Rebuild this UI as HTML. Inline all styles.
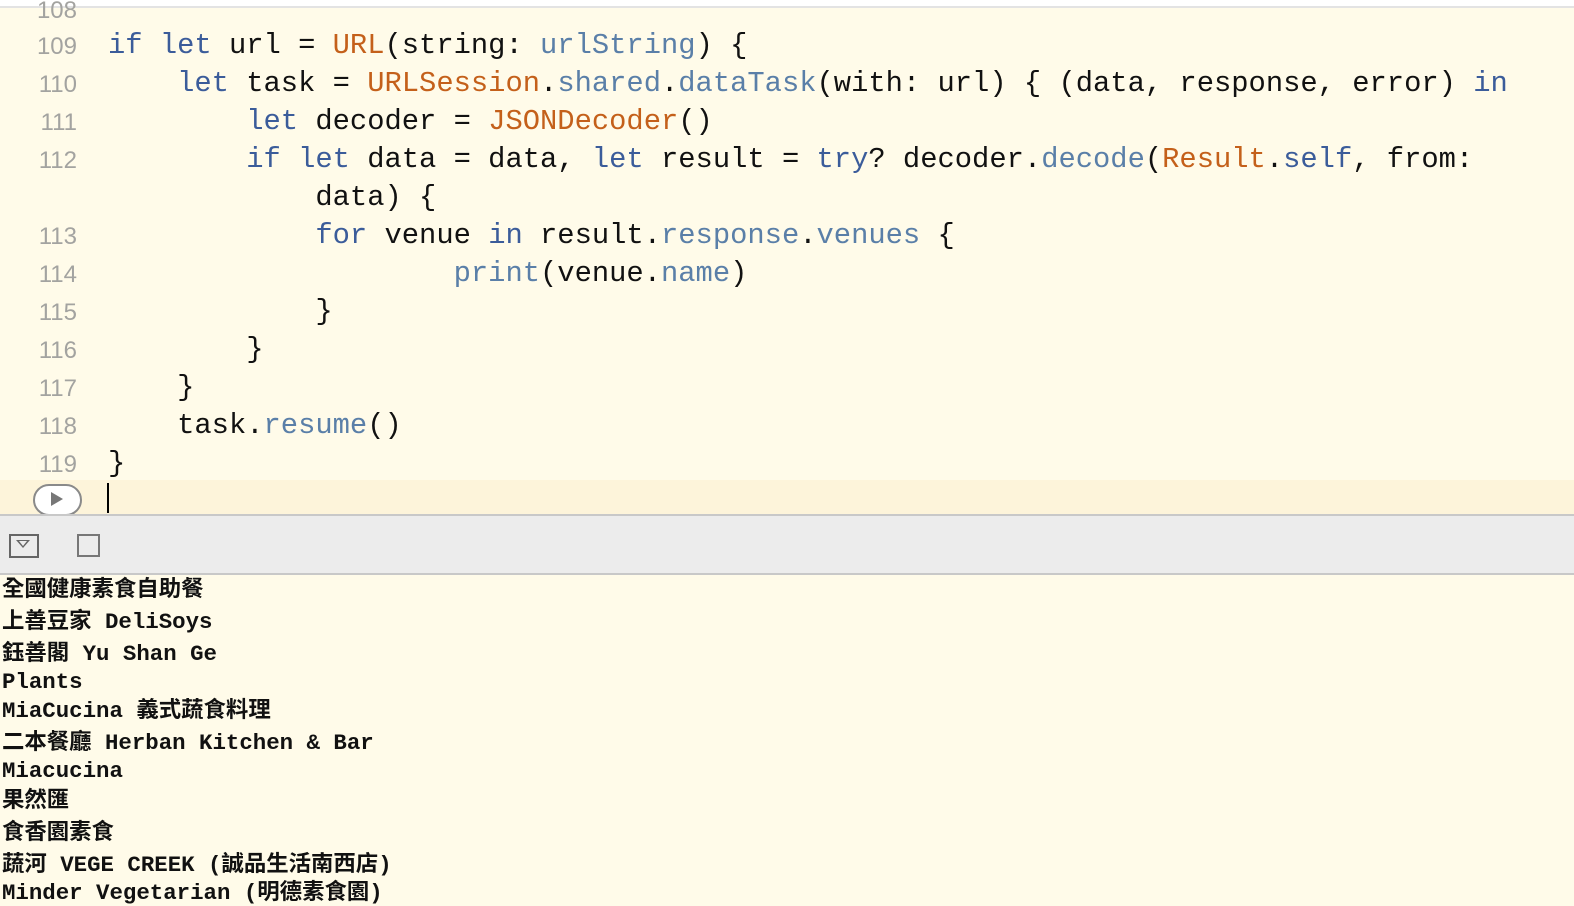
<!DOCTYPE html>
<html><head><meta charset="utf-8"><style>
body{margin:0;width:1574px;height:898px;overflow:hidden;background:#fffbe9;position:relative;font-family:"Liberation Mono",monospace}
.top{position:absolute;left:0;top:0;width:1574px;height:6px;background:#fff;border-bottom:2px solid #e3e3e3}
.ln{position:absolute;left:0;width:77px;text-align:right;font-family:"Liberation Sans",sans-serif;font-size:24px;color:#a3a3a0}
.c{position:absolute;left:108px;font-size:28.8px;white-space:pre;color:#111;line-height:38px}
.k{color:#3b5c9a}.t{color:#c4601a}.p{color:#5a7fa8}
.cur{position:absolute;left:0;top:480px;width:1574px;height:34px;background:#fdf4da}
.bar{position:absolute;left:0;top:514px;width:1574px;height:57px;background:#ececec;border-top:2px solid #c8c8c8;border-bottom:2px solid #c8c8c8}
.o{position:absolute;left:2px;font-family:"Liberation Mono","Noto Sans CJK TC",monospace;font-weight:bold;font-size:22.4px;white-space:pre;color:#111;line-height:26px}
</style></head><body>
<div class="top"></div>
<div class="ln" style="top:-3px;">108</div>
<div class="cur"></div>
<div class="ln" style="top:33px">109</div>
<div class="ln" style="top:71px">110</div>
<div class="ln" style="top:109px">111</div>
<div class="ln" style="top:147px">112</div>
<div class="ln" style="top:223px">113</div>
<div class="ln" style="top:261px">114</div>
<div class="ln" style="top:299px">115</div>
<div class="ln" style="top:337px">116</div>
<div class="ln" style="top:375px">117</div>
<div class="ln" style="top:413px">118</div>
<div class="ln" style="top:451px">119</div>
<div class="c" style="top:27px"><span class="k">if let</span> url = <span class="t">URL</span>(string: <span class="p">urlString</span>) {</div>
<div class="c" style="top:65px">    <span class="k">let</span> task = <span class="t">URLSession</span>.<span class="p">shared</span>.<span class="p">dataTask</span>(with: url) { (data, response, error) <span class="k">in</span></div>
<div class="c" style="top:103px">        <span class="k">let</span> decoder = <span class="t">JSONDecoder</span>()</div>
<div class="c" style="top:141px">        <span class="k">if let</span> data = data, <span class="k">let</span> result = <span class="k">try</span>? decoder.<span class="p">decode</span>(<span class="t">Result</span>.<span class="k">self</span>, from:</div>
<div class="c" style="top:179px">            data) {</div>
<div class="c" style="top:217px">            <span class="k">for</span> venue <span class="k">in</span> result.<span class="p">response</span>.<span class="p">venues</span> {</div>
<div class="c" style="top:255px">                    <span class="p">print</span>(venue.<span class="p">name</span>)</div>
<div class="c" style="top:293px">            }</div>
<div class="c" style="top:331px">        }</div>
<div class="c" style="top:369px">    }</div>
<div class="c" style="top:407px">    task.<span class="p">resume</span>()</div>
<div class="c" style="top:445px">}</div>
<div style="position:absolute;left:33px;top:484px;width:45px;height:28px;border:2px solid #8a8a8a;border-radius:16px;background:#fff"></div>
<div style="position:absolute;left:51px;top:492px;width:0;height:0;border-left:12px solid #777;border-top:7px solid transparent;border-bottom:7px solid transparent"></div>
<div style="position:absolute;left:107px;top:483px;width:2px;height:30px;background:#000"></div>
<div class="bar"></div>
<div style="position:absolute;left:9px;top:534px;width:26px;height:20px;border:2px solid #666"></div>
<div style="position:absolute;left:16px;top:540px;width:0;height:0;border-top:8px solid #666;border-left:7px solid transparent;border-right:7px solid transparent"></div>
<div style="position:absolute;left:19px;top:541px;width:0;height:0;border-top:5px solid #ececec;border-left:4px solid transparent;border-right:4px solid transparent"></div>
<div style="position:absolute;left:77px;top:534px;width:19px;height:19px;border:2px solid #777"></div>
<div class="o" style="top:577px">全國健康素食自助餐</div>
<div class="o" style="top:609px">上善豆家 DeliSoys</div>
<div class="o" style="top:641px">鈺善閣 Yu Shan Ge</div>
<div class="o" style="top:669px">Plants</div>
<div class="o" style="top:698px">MiaCucina 義式蔬食料理</div>
<div class="o" style="top:730px">二本餐廳 Herban Kitchen &amp; Bar</div>
<div class="o" style="top:758px">Miacucina</div>
<div class="o" style="top:788px">果然匯</div>
<div class="o" style="top:820px">食香園素食</div>
<div class="o" style="top:852px">蔬河 VEGE CREEK (誠品生活南西店)</div>
<div class="o" style="top:880px">Minder Vegetarian (明德素食園)</div>
</body></html>
